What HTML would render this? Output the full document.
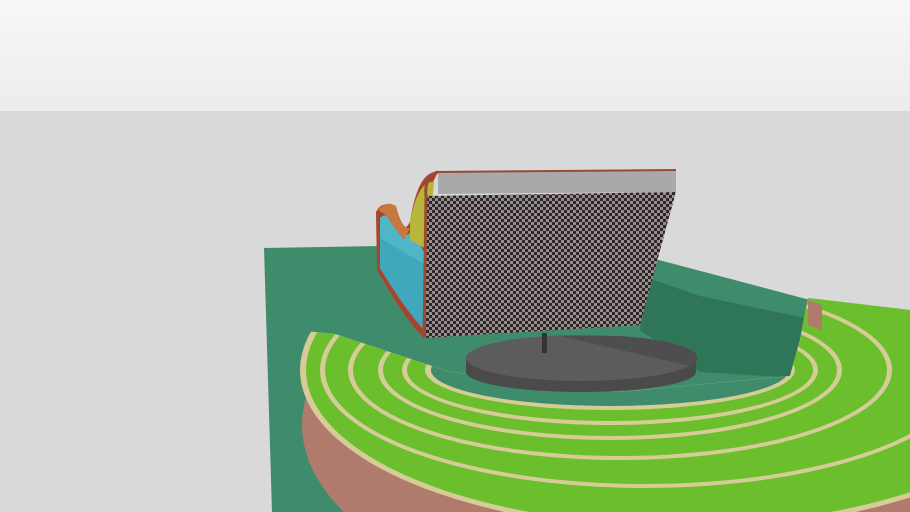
<!DOCTYPE html>
<html><head><style>
html,body{margin:0;padding:0;width:910px;height:512px;overflow:hidden;background:#d9d9d9}
svg{display:block}
</style></head><body>
<svg width="910" height="512" viewBox="0 0 910 512" xmlns="http://www.w3.org/2000/svg">
<defs>
<linearGradient id="sky" x1="0" y1="0" x2="0" y2="1"><stop offset="0" stop-color="#f7f7f7"/><stop offset="1" stop-color="#ececec"/></linearGradient>
<pattern id="chk" width="6" height="6" patternUnits="userSpaceOnUse"><rect width="6" height="6" fill="#968e8e"/><rect width="3" height="3" fill="#2e2626"/><rect x="3" y="3" width="3" height="3" fill="#2e2626"/></pattern>
<clipPath id="seat"><polygon points="295,330 335,334 450,372 620,392 790,376 800,340 808,298 910,310 910,512 295,512"/></clipPath>
</defs>
<rect width="910" height="111" fill="url(#sky)"/>
<rect y="111" width="910" height="401" fill="#d9d9d9"/>
<polygon points="264,248 380,246 640,255 810,300 910,318 910,512 272,512" fill="#3f8c6c"/>
<polygon points="648,278 700,296 805,318 800,378 700,372 640,330" fill="#2f7659"/>
<g clip-path="url(#seat)">
<ellipse cx="680" cy="425" rx="378" ry="190" fill="#b07a6c"/>
<ellipse cx="680" cy="370" rx="380" ry="160" fill="#d6cc98"/><ellipse cx="680" cy="370" rx="374" ry="155" fill="#6cbf2c"/>
<ellipse cx="645" cy="370" rx="325" ry="118" fill="#d6cc98"/><ellipse cx="645" cy="370" rx="320" ry="114" fill="#6cbf2c"/>
<ellipse cx="620" cy="370" rx="272" ry="90" fill="#d6cc98"/><ellipse cx="620" cy="370" rx="267" ry="86" fill="#6cbf2c"/>
<ellipse cx="610" cy="370" rx="232" ry="70" fill="#d6cc98"/><ellipse cx="610" cy="370" rx="227" ry="66" fill="#6cbf2c"/>
<ellipse cx="610" cy="370" rx="208" ry="55" fill="#d6cc98"/><ellipse cx="610" cy="370" rx="203" ry="51" fill="#6cbf2c"/>
<ellipse cx="610" cy="370" rx="185" ry="40" fill="#d6cc98"/><ellipse cx="610" cy="370" rx="179" ry="36" fill="#3f8c6c"/>
</g>
<polygon points="808,300 822,305 822,330 808,325" fill="#b07a6c"/>
<path d="M466,358 L466,372 A115,20 0 0 0 696,372 L696,358 Z" fill="#4a4a4a"/>
<ellipse cx="581" cy="358" rx="115" ry="23" fill="#5c5c5c"/>
<path d="M560,336 L620,336 A115,23 0 0 1 690,366 Z" fill="#4e4e4e"/>
<rect x="542" y="333" width="5" height="20" fill="#333"/>
<path d="M376,212 Q382,200 392,208 Q400,240 410,222 Q418,170 438,172 L426,196 L424,338 Q405,320 377,270 Z" fill="#a8442e"/>
<path d="M380,218 Q386,212 392,220 Q402,245 412,230 L424,252 L424,330 Q402,305 380,268 Z" fill="#4fb6c8"/>
<path d="M380,238 L424,264 L424,330 Q402,305 380,268 Z" fill="#3fa8bc"/>
<path d="M410,222 Q418,180 434,182 L428,250 L410,240 Z" fill="#b7b53a"/>
<path d="M378,210 Q386,200 396,206 Q402,230 410,228 L404,240 Q392,225 386,215 Z" fill="#c77840"/>
<path d="M426,196 L676,192 Q660,250 640,325 L424,338 Z" fill="url(#chk)"/>
<polygon points="438,172 676,170 676,192 438,194" fill="#a9a9a9"/>
<line x1="436" y1="172" x2="676" y2="170" stroke="#9b4a32" stroke-width="2"/>
<path d="M438,172 Q424,176 426,196 L424,338" stroke="#9b4a32" stroke-width="3" fill="none"/>
</svg>
</body></html>
